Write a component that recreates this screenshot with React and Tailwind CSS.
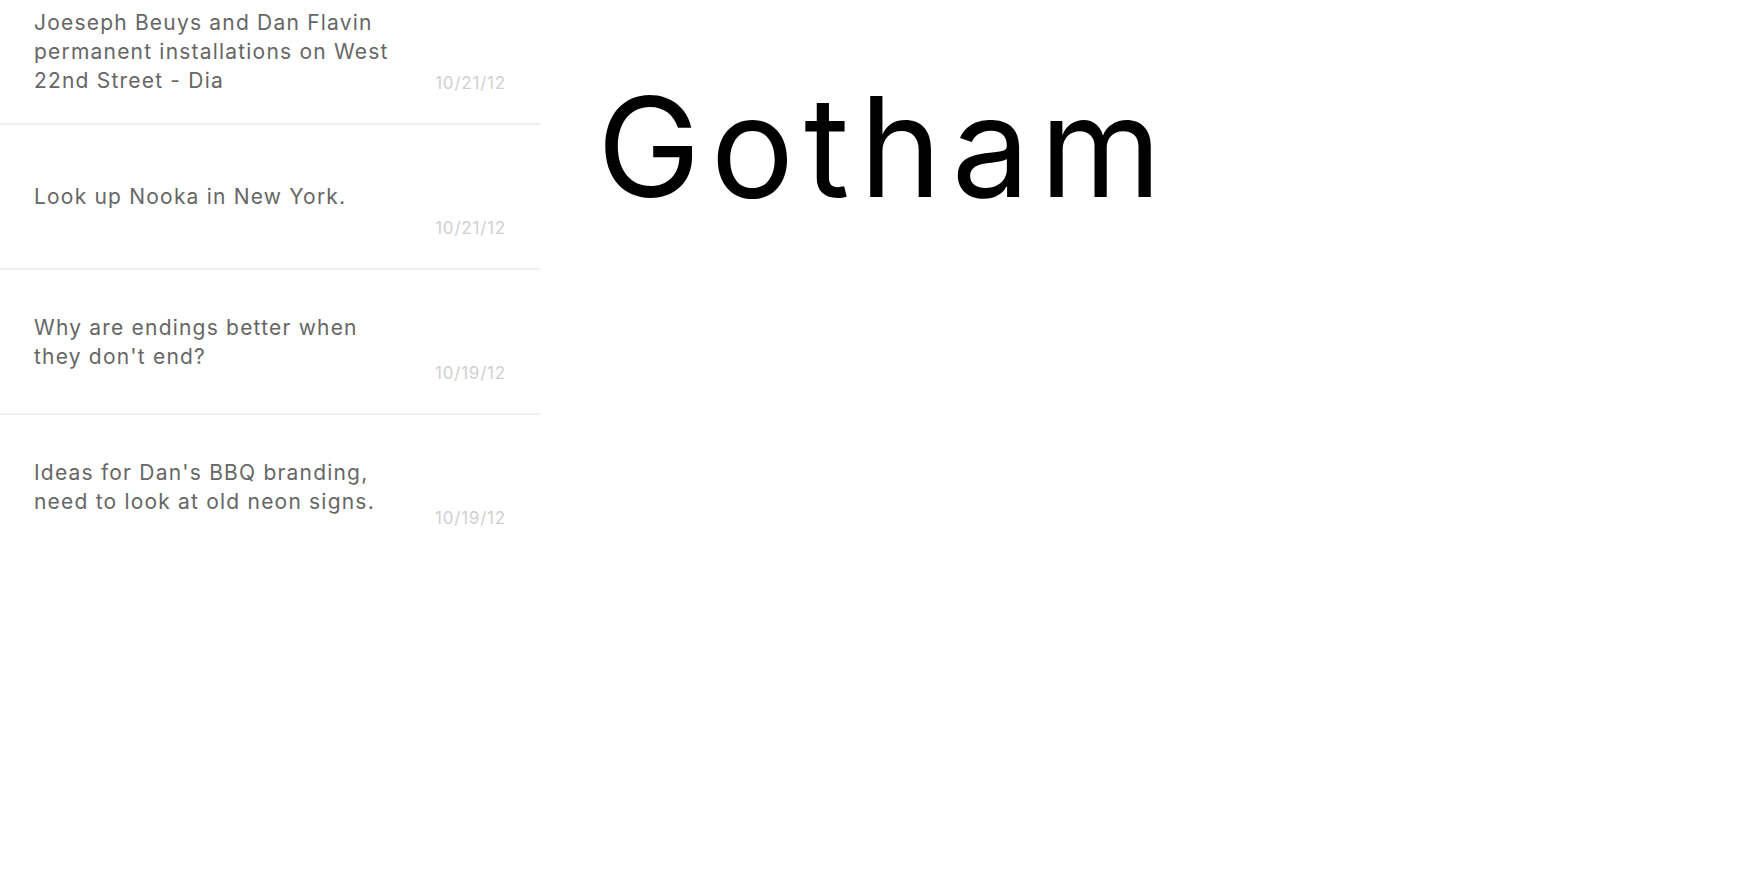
import React from "react";

const notes = [
  { lines: ["Joeseph Beuys and Dan Flavin", "permanent installations on West", "22nd Street - Dia"], date: "10/21/12" },
  { lines: ["Look up Nooka in New York."], date: "10/21/12" },
  { lines: ["Why are endings better when", "they don't end?"], date: "10/19/12" },
  { lines: ["Ideas for Dan's BBQ branding,", "need to look at old neon signs."], date: "10/19/12" },
];

export default function App() {
  return (
    <div
      className="w-[1760px] h-[880px] bg-white overflow-hidden flex"
      style={{ fontFamily: "Inter, 'Open Sans', sans-serif" }}
    >
      <div className="w-[540px] shrink-0">
        <div className="mt-[-20px] flex flex-col">
          {notes.map((n, i) => (
            <div
              key={i}
              className={`h-[145px] flex items-center justify-between pl-[34px] pr-[34px] border-b-2 ${i < notes.length - 1 ? "border-[#f0f0f0]" : "border-transparent"}`}
            >
              <div className="text-[21px] leading-[29px] tracking-[1.2px] text-[#666666]">
                {n.lines.map((l, j) => (
                  <div key={j}>{l}</div>
                ))}
              </div>
              <div className="self-end mb-[30px] text-[17px] leading-[20px] tracking-[0.8px] text-[#d0d0d0]">
                {n.date}
              </div>
            </div>
          ))}
        </div>
      </div>
      <div className="pl-[57px] pt-[77px]">
        <div className="text-[139px] leading-none tracking-[10px] text-black font-normal">
          Gotham
        </div>
      </div>
    </div>
  );
}
